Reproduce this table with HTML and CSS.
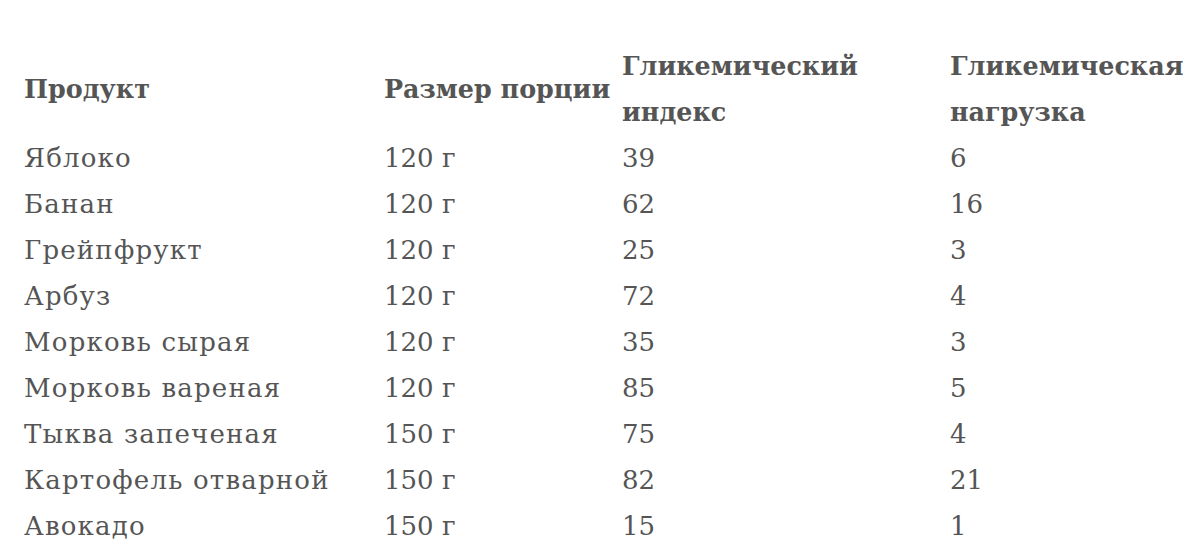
FILE: index.html
```html
<!DOCTYPE html>
<html lang="ru">
<head>
<meta charset="utf-8">
<link rel="stylesheet" href="styles.css">
</head>
<body>
<div class="wrap">
<table class="gi">
<colgroup><col class="c1"><col class="c2"><col class="c3"><col class="c4"></colgroup>
<thead>
<tr><th>Продукт</th><th>Размер порции</th><th>Гликемический индекс</th><th>Гликемическая нагрузка</th></tr>
</thead>
<tbody>
<tr><td>Яблоко</td><td>120 г</td><td>39</td><td>6</td></tr>
<tr><td>Банан</td><td>120 г</td><td>62</td><td>16</td></tr>
<tr><td>Грейпфрукт</td><td>120 г</td><td>25</td><td>3</td></tr>
<tr><td>Арбуз</td><td>120 г</td><td>72</td><td>4</td></tr>
<tr><td>Морковь сырая</td><td>120 г</td><td>35</td><td>3</td></tr>
<tr><td>Морковь вареная</td><td>120 г</td><td>85</td><td>5</td></tr>
<tr><td>Тыква запеченая</td><td>150 г</td><td>75</td><td>4</td></tr>
<tr><td>Картофель отварной</td><td>150 г</td><td>82</td><td>21</td></tr>
<tr><td>Авокадо</td><td>150 г</td><td>15</td><td>1</td></tr>
</tbody>
</table>
</div>
</body>
</html>
```
FILE: styles.css
```css
html, body {
  margin: 0;
  padding: 0;
  background: #fff;
}
.wrap {
  padding: 43px 0 0 24px;
}
.gi {
  border-collapse: collapse;
  font-family: "DejaVu Serif", "Liberation Serif", serif;
  font-size: 26px;
  line-height: 46px;
  color: #555;
  font-variant-numeric: oldstyle-nums;
  table-layout: fixed;
  width: 1176px;
}
.c1 { width: 360px; }
.c2 { width: 238px; }
.c3 { width: 328px; }
.c4 { width: 250px; }
.gi th, .gi td {
  padding: 0;
  text-align: left;
  vertical-align: middle;
  white-space: nowrap;
}
.gi td:first-child {
  letter-spacing: 1.2px;
}
.gi th {
  font-size: 25.4px;
  font-weight: bold;
  white-space: normal;
}
```
